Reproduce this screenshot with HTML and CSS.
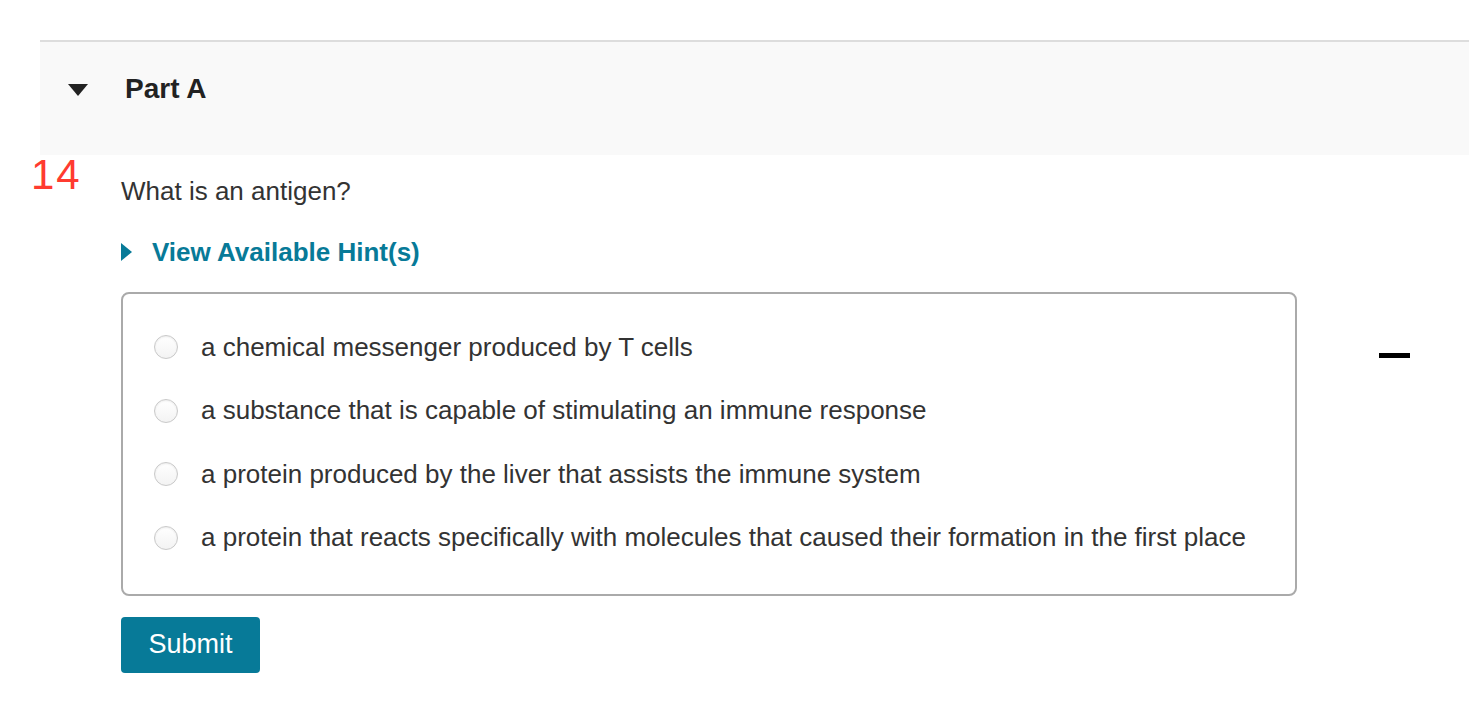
FILE: index.html
```html
<!DOCTYPE html>
<html>
<head>
<link rel="stylesheet" href="styles.css">
</head>
<body>

<div class="part">
  <div class="part-header">
    <span class="caret-down"></span>
    <h2 class="part-title">Part A</h2>
  </div>

  <div class="question">
    <div class="question-number">14</div>
    <p class="question-text">What is an antigen?</p>

    <a class="hint-toggle" href="#">
      <span class="caret-right"></span>
      View Available Hint(s)
    </a>

    <div class="answer-row">
      <div class="choices">
        <label class="choice">
          <span class="radio"></span>
          a chemical messenger produced by T cells
        </label>
        <label class="choice">
          <span class="radio"></span>
          a substance that is capable of stimulating an immune response
        </label>
        <label class="choice">
          <span class="radio"></span>
          a protein produced by the liver that assists the immune system
        </label>
        <label class="choice">
          <span class="radio"></span>
          a protein that reacts specifically with molecules that caused their formation in the first place
        </label>
      </div>
      <span class="minus"></span>
    </div>

    <button class="submit-btn">Submit</button>
  </div>
</div>

</body>
</html>
```

FILE: styles.css
```css
body {
  margin: 0;
  font-family: "Liberation Sans", Arial, sans-serif;
  color: #333;
  background: #fff;
}

.part {
  margin: 40px 0 0 40px;
  border-top: 2px solid #ddd;
}

.part-header {
  display: flex;
  align-items: flex-start;
  height: 113px;
  box-sizing: border-box;
  padding: 31px 0 0 28px;
  background-color: #f9f9f9;
}

.caret-down {
  width: 0;
  height: 0;
  margin-top: 11px;
  border-left: 10.5px solid transparent;
  border-right: 10.5px solid transparent;
  border-top: 12px solid #222;
}

.part-title {
  margin: 0 0 0 37px;
  font-size: 28px;
  line-height: 32px;
  font-weight: bold;
  color: #222;
}

.question {
  position: relative;
  padding-left: 81px;
}

.question-number {
  position: absolute;
  left: -9px;
  top: -1px;
  font-size: 42px;
  line-height: 42px;
  letter-spacing: 2px;
  color: #ff3b30;
}

.question-text {
  margin: 0;
  padding-top: 21px;
  font-size: 26px;
  line-height: 30px;
}

.hint-toggle {
  display: flex;
  align-items: center;
  margin-top: 31px;
  font-size: 26px;
  line-height: 30px;
  font-weight: bold;
  color: #077a98;
  text-decoration: none;
}

.caret-right {
  width: 0;
  height: 0;
  margin: 0 20px 0 0;
  border-top: 9px solid transparent;
  border-bottom: 9px solid transparent;
  border-left: 11px solid #077a98;
}

.answer-row {
  display: flex;
  align-items: flex-start;
  margin-top: 25px;
}

.choices {
  width: 1176px;
  box-sizing: border-box;
  padding: 33px 0 36px 31px;
  border: 2px solid #aaa;
  border-radius: 8px;
  display: flex;
  flex-direction: column;
  gap: 23.5px;
}

.choice {
  display: flex;
  align-items: center;
  height: 40px;
  font-size: 26px;
  color: #333;
}

.radio {
  width: 24px;
  height: 24px;
  box-sizing: border-box;
  margin-right: 23px;
  border: 1px solid #c9c9c9;
  border-radius: 50%;
  background: linear-gradient(#fff, #f3f3f3);
  box-shadow: inset 0 1px 2px rgba(0,0,0,0.08);
}

.minus {
  width: 31px;
  height: 5px;
  margin: 61px 0 0 82px;
  background: #000;
}

.submit-btn {
  display: block;
  margin-top: 21px;
  width: 139px;
  height: 56px;
  padding: 0;
  border: none;
  border-radius: 4px;
  background-color: #077a98;
  color: #fff;
  font-family: "Liberation Sans", Arial, sans-serif;
  font-size: 27px;
}
```
